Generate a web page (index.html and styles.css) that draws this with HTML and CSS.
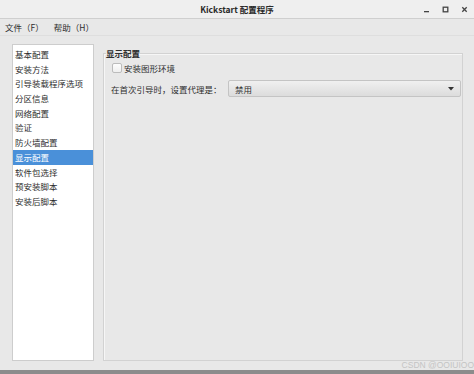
FILE: index.html
```html
<!DOCTYPE html>
<html lang="zh-CN">
<head>
    <meta charset="UTF-8">
    <title>Kickstart 配置程序</title>
    <link rel="stylesheet" href="styles.css">
</head>
<body>
    <div class="window">
        <div class="titlebar">
            <span></span>
            <span class="title">Kickstart 配置程序</span>
            <span class="controls">
                <svg width="7" height="7" viewBox="0 0 7 7"><rect x="1" y="5" width="5" height="1.3" fill="#444"/></svg>
                <svg width="7" height="7" viewBox="0 0 7 7"><rect x="1.2" y="1.2" width="4.6" height="4.6" fill="none" stroke="#444" stroke-width="1.3"/></svg>
                <svg width="7" height="7" viewBox="0 0 7 7"><path d="M1.3 1.3 L5.7 5.7 M5.7 1.3 L1.3 5.7" stroke="#444" stroke-width="1.3"/></svg>
            </span>
        </div>
        <div class="menubar">
            <span class="menu">文件（F）</span>
            <span class="menu">帮助（H）</span>
        </div>
        <div class="main">
            <ul class="sections">
                <li>基本配置</li>
                <li>安装方法</li>
                <li>引导装载程序选项</li>
                <li>分区信息</li>
                <li>网络配置</li>
                <li>验证</li>
                <li>防火墙配置</li>
                <li class="selected">显示配置</li>
                <li>软件包选择</li>
                <li>预安装脚本</li>
                <li>安装后脚本</li>
            </ul>
            <fieldset class="frame">
                <legend>显示配置</legend>
                <div class="frame-body">
                    <label class="check-row"><span class="checkbox"></span>安装图形环境</label>
                    <div class="field-row">
                        <span class="field-label">在首次引导时，设置代理是：</span>
                        <div class="combo">
                            <span>禁用</span>
                            <svg width="6" height="4" viewBox="0 0 6 4"><path d="M0 0 L6 0 L3 3.5 Z" fill="#333"/></svg>
                        </div>
                    </div>
                </div>
            </fieldset>
        </div>
        <span class="watermark">CSDN @OOIUIOO</span>
    </div>
</body>
</html>
```

FILE: styles.css
```css
* {
    box-sizing: border-box;
}

body {
    margin: 0;
    width: 474px;
    height: 374px;
    background: #8c8c8c;
    font-family: "Noto Sans CJK SC", "Noto Sans", sans-serif;
    font-size: 8.5px;
    color: #2e2e2e;
    overflow: hidden;
}

.window {
    position: relative;
    height: 370px;
    background: #e8e8e8;
    display: flex;
    flex-direction: column;
}

.titlebar {
    height: 19px;
    display: grid;
    grid-template-columns: 1fr auto 1fr;
    align-items: center;
    background: #efefef;
    border-bottom: 1px solid #cfcfcf;
}

.title {
    font-weight: 700;
    font-size: 8.5px;
    color: #2a2a2a;
}

.controls {
    justify-self: end;
    display: flex;
    gap: 12px;
    padding-right: 6px;
}

.controls svg {
    display: block;
}

.menubar {
    height: 17px;
    display: flex;
    align-items: center;
    padding-left: 5px;
    gap: 10px;
    border-bottom: 1px solid #dedede;
}

.main {
    flex: 1;
    display: flex;
    gap: 9px;
    padding: 8px 11px 9px 12px;
}

.sections {
    width: 82px;
    margin: 0;
    padding: 2px 0 0 0;
    list-style: none;
    background: #fff;
    border: 1px solid #cdcdcd;
}

.sections li {
    height: 14.7px;
    line-height: 14.7px;
    padding-left: 2px;
    white-space: nowrap;
}

.sections .selected {
    background: #4a90d9;
    color: #fff;
}

.frame {
    flex: 1;
    margin: 0;
    padding: 0 1px 0 2px;
    border: 1px solid #d2d2d2;
    box-shadow: inset 1px 1px 0 #f6f6f6;
    min-width: 0;
}

.frame legend {
    padding: 0;
    line-height: 18px;
    font-weight: 700;
}

.frame-body {
    padding-left: 5px;
}

.check-row {
    display: flex;
    align-items: center;
    height: 12px;
    gap: 2px;
    padding-left: 1px;
}

.checkbox {
    width: 10px;
    height: 10px;
    border: 1px solid #bcbcbc;
    border-radius: 2px;
    background: linear-gradient(#fdfdfd, #efefef);
}

.field-row {
    display: flex;
    align-items: center;
    margin-top: 6px;
}

.field-label {
    width: 117px;
}

.combo {
    flex: 1;
    height: 17px;
    display: flex;
    align-items: center;
    justify-content: space-between;
    padding: 0 6px 0 6px;
    border: 1px solid #c4c4c4;
    border-radius: 2px;
    background: linear-gradient(#f0f0f0, #dcdcdc);
}

.watermark {
    position: absolute;
    right: 0;
    bottom: 0;
    font-family: "Liberation Sans", sans-serif;
    font-size: 8.5px;
    line-height: 9px;
    color: #c4c4c4;
}
```
